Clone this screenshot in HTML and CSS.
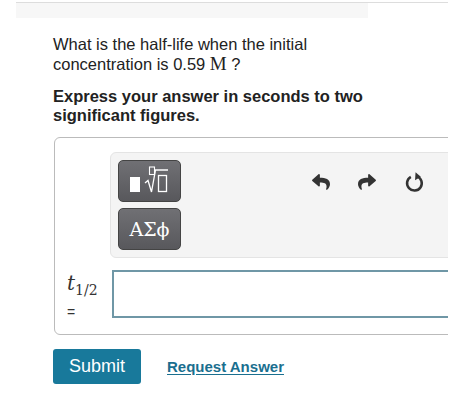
FILE: index.html
```html
<!DOCTYPE html>
<html>
<head>
<meta charset="utf-8">
<link rel="stylesheet" href="styles.css">
</head>
<body>
<div class="page">
  <div class="topbar"><div class="graybar"></div></div>
  <div class="content">
    <p class="question">What is the half-life when the initial concentration is 0.59 <span class="math">M</span> ?</p>
    <p class="instr">Express your answer in seconds to two significant figures.</p>
    <div class="answer-box">
      <div class="toolbar">
        <div class="btn-col">
          <div class="tbtn">
            <svg width="44" height="32" viewBox="0 0 44 32">
              <rect x="2" y="12" width="10" height="15" fill="#fff"/>
              <rect x="21.5" y="2" width="5" height="7.5" fill="none" stroke="#fff" stroke-width="1.1"/>
              <path d="M17 18 L20 15.5 L23.5 27 L27.5 5 L40 5" fill="none" stroke="#fff" stroke-width="1.3"/>
              <rect x="30.5" y="10.5" width="8" height="16" fill="none" stroke="#fff" stroke-width="1.3"/>
            </svg>
          </div>
          <div class="tbtn greek">ΑΣϕ</div>
        </div>
        <div class="actions">
          <svg class="ic" width="18" height="18" viewBox="0 0 512 512"><path fill="#333" d="M8.3 189.8L184.3 37.9C199.7 24.5 224 35.3 224 56v80c160.6 1.8 288 34 288 186.3 0 61.4-39.6 122.3-83.3 154.1-13.7 9.9-33.1-2.5-28.1-18.6 45.3-145-21.5-183.5-176.6-185.7V360c0 20.7-24.3 31.5-39.7 18.2l-176-152c-11.1-9.6-11.1-26.8 0-36.4z"/></svg>
          <svg class="ic" width="18" height="18" viewBox="0 0 512 512"><path fill="#333" transform="translate(512 0) scale(-1 1)" d="M8.3 189.8L184.3 37.9C199.7 24.5 224 35.3 224 56v80c160.6 1.8 288 34 288 186.3 0 61.4-39.6 122.3-83.3 154.1-13.7 9.9-33.1-2.5-28.1-18.6 45.3-145-21.5-183.5-176.6-185.7V360c0 20.7-24.3 31.5-39.7 18.2l-176-152c-11.1-9.6-11.1-26.8 0-36.4z"/></svg>
          <svg class="ic" width="21" height="21" viewBox="0 0 20 20"><path d="M12.5 4.2 A7 7 0 1 1 6.5 4.6" fill="none" stroke="#333" stroke-width="2.4"/><path d="M11 0.3 L16 4.5 L10.5 7.8 Z" fill="#333"/></svg>
        </div>
      </div>
      <div class="input-row">
        <div class="label"><span class="t">t<sub>1/2</sub></span><span class="eq">=</span></div>
        <div class="input"></div>
      </div>
    </div>
    <div class="buttons">
      <button class="submit">Submit</button>
      <a class="request" href="#">Request Answer</a>
    </div>
  </div>
</div>
</body>
</html>
```
FILE: styles.css
```css
* { box-sizing: border-box; }
html, body { margin: 0; padding: 0; background: #fff; }
body { font-family: "Liberation Sans", Arial, sans-serif; color: #222; }
.page { margin-left: 16px; width: 432px; height: 406px; overflow: hidden; padding-top: 2px; }
.topbar { border-top: 1px solid #ddd; }
.graybar { width: 352px; height: 15px; background: #f7f7f7; }
.content { padding-left: 37px; }
.question { margin: 16px 0 0; font-size: 16.5px; line-height: 20px; width: 290px; }
.math { font-family: "Liberation Serif", serif; font-size: 19px; }
.instr { margin: 13px 0 0; font-size: 16.5px; line-height: 19px; font-weight: bold; width: 330px; }
.answer-box { margin-top: 12px; margin-left: 1px; width: 430px; border: 1px solid #bbb; border-radius: 6px; padding: 14px 0 14px 12px; }
.toolbar { margin-left: 43px; height: 106px; background: #f4f4f4; border: 1px solid #e4e4e4; border-radius: 6px; display: flex; padding: 7px 0 0 7px; }
.btn-col { display: flex; flex-direction: column; gap: 6px; }
.tbtn { width: 63px; height: 42px; border-radius: 5px; background: linear-gradient(#707074, #58585c); border: 1px solid #444; display: flex; align-items: center; justify-content: center; color: #fff; }
.greek { font-family: "DejaVu Serif", "Liberation Serif", serif; font-size: 19px; }
.actions { display: flex; align-items: center; gap: 28px; margin-left: 131px; height: 44px; }
.ic { display: block; }
.input-row { display: flex; align-items: flex-start; margin-top: 12px; }
.label { width: 45px; display: flex; flex-direction: column; padding-top: 2px; }
.t { font-family: "DejaVu Serif", "Liberation Serif", serif; font-style: italic; font-size: 20px; color: #333; line-height: 22px; }
.t sub { font-style: normal; font-size: 14px; vertical-align: -5px; }
.eq { font-size: 14px; color: #333; margin-top: 3px; }
.input { flex: 1; height: 48px; border: 2px solid #6f97a6; border-right: none; }
.buttons { display: flex; align-items: center; margin-top: 14px; gap: 26px; }
.submit { width: 88px; height: 35px; background: #18799b; color: #fff; border: none; border-radius: 3px; font-family: "Liberation Sans", Arial, sans-serif; font-size: 18px; padding: 0; }
.request { color: #1a6f8f; font-weight: bold; font-size: 15px; text-decoration: underline; text-underline-offset: 2px; }
```
